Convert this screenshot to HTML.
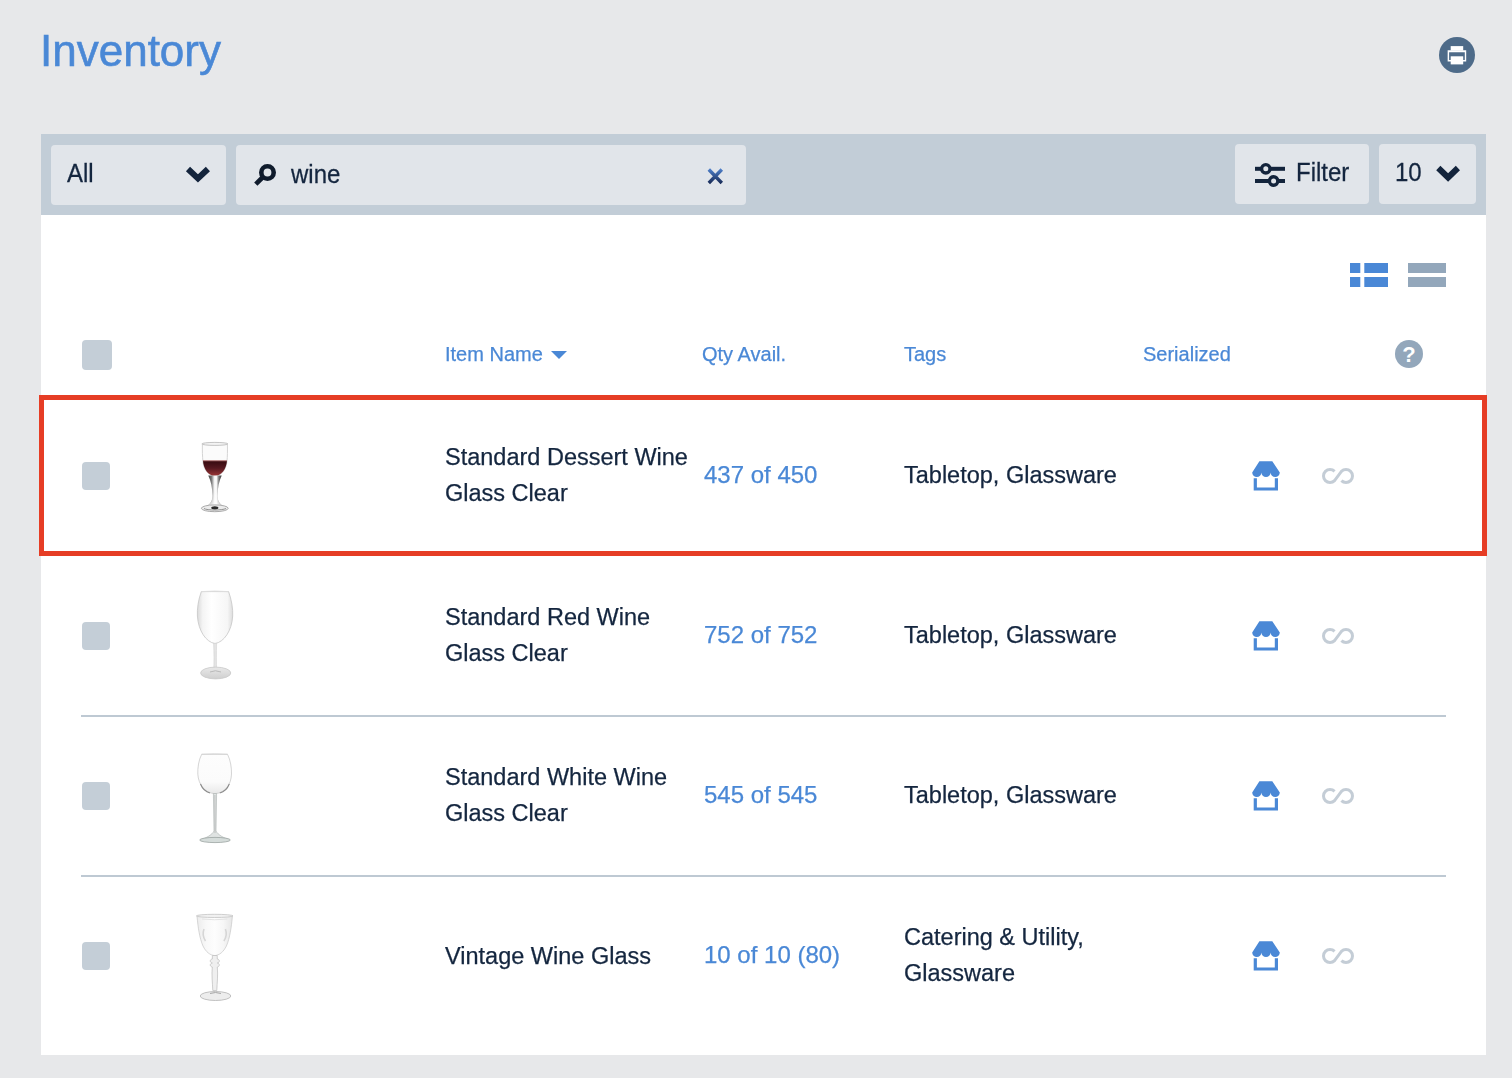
<!DOCTYPE html>
<html><head><meta charset="utf-8">
<style>
html,body{margin:0;padding:0;}
body{width:1512px;height:1078px;overflow:hidden;background:#e7e8ea;position:relative;font-family:"Liberation Sans",sans-serif;color:#14263f;}
.a{position:absolute;}
.t{position:absolute;line-height:1;white-space:nowrap;will-change:transform;-webkit-text-stroke:0.25px currentColor;}
.title{font-size:44px;color:#4a88d6;left:40px;top:29px;-webkit-text-stroke:0.6px #4a88d6;transform:scaleY(1.02);transform-origin:0 80%;}
.toolbar{left:41px;top:134px;width:1445px;height:81px;background:#c2cdd7;}
.box{position:absolute;background:#e1e5ea;border-radius:4px;}
.panel{left:41px;top:215px;width:1445px;height:840px;background:#fff;}
.hdr{font-size:20px;color:#4a88d6;}
.cb{position:absolute;width:30px;height:30px;border-radius:4px;background:#c4ced7;}
.cbr{position:absolute;width:28px;height:28px;border-radius:4px;background:#c4ced7;}
.nm{font-size:23.5px;}
.qty{font-size:24px;color:#4a88d6;}
.sep{position:absolute;left:81px;width:1365px;height:2px;background:#bec9d3;}
</style></head>
<body>
<div class="t title">Inventory</div>
<!-- print -->
<svg class="a" style="left:1439px;top:37px" width="36" height="36" viewBox="0 0 36 36">
<circle cx="18" cy="18" r="18" fill="#4e6b89"/>
<rect x="11.7" y="9.1" width="12.5" height="4.5" fill="#fff"/>
<path fill="#fff" fill-rule="evenodd" d="M8.65,13.2H27.2V24.4H8.65Z M10.1,15.2V23H25.8V15.2Z"/>
<rect x="11.7" y="19.3" width="12.5" height="8.1" fill="#fff"/>
</svg>

<div class="a toolbar"></div>
<div class="box" style="left:51px;top:145px;width:175px;height:60px;"></div>
<div class="box" style="left:236px;top:145px;width:510px;height:60px;"></div>
<div class="box" style="left:1235px;top:144px;width:134px;height:60px;"></div>
<div class="box" style="left:1379px;top:144px;width:97px;height:60px;"></div>

<div class="t" style="transform:scaleY(1.045);transform-origin:0 84.6%;font-size:24px;left:67px;top:161.7px;">All</div>
<svg class="a" style="left:184px;top:164px" width="28" height="22" viewBox="0 0 28 22">
<path d="M4,5 L13.95,14.46 L23.9,5" fill="none" stroke="#13243c" stroke-width="6"/>
</svg>
<!-- search icon -->
<svg class="a" style="left:252px;top:162px" width="26" height="26" viewBox="0 0 26 26">
<circle cx="15.5" cy="10.5" r="6.2" fill="none" stroke="#0f1b2c" stroke-width="4.6"/>
<path d="M11.5,14.5 L3.8,22.2" stroke="#0f1b2c" stroke-width="4.6"/>
</svg>
<div class="t" style="transform:scaleY(1.045);transform-origin:0 84.6%;font-size:24px;left:290.5px;top:162.5px;">wine</div>
<svg class="a" style="left:700px;top:162px" width="30" height="28" viewBox="0 0 30 28">
<defs><linearGradient id="xg" x1="0" y1="0" x2="0" y2="1"><stop offset="0" stop-color="#4b7cc6"/><stop offset="1" stop-color="#192d5a"/></linearGradient></defs>
<path d="M8.8,7.5 L21.8,21 M21.8,7.5 L8.8,21" stroke="url(#xg)" stroke-width="3.4" fill="none"/>
</svg>
<!-- filter -->
<svg class="a" style="left:1254px;top:161px" width="32" height="27" viewBox="0 0 32 27">
<rect x="1" y="5.8" width="30" height="4" fill="#13243c"/>
<rect x="1" y="18" width="30" height="4" fill="#13243c"/>
<circle cx="11.8" cy="7.8" r="4.2" fill="#e1e5ea" stroke="#13243c" stroke-width="3.4"/>
<circle cx="19.6" cy="20" r="4.2" fill="#e1e5ea" stroke="#13243c" stroke-width="3.4"/>
</svg>
<div class="t" style="transform:scaleY(1.045);transform-origin:0 84.6%;font-size:24px;left:1296px;top:160.5px;">Filter</div>
<div class="t" style="transform:scaleY(1.045);transform-origin:0 84.6%;font-size:24px;left:1394.6px;top:160.7px;">10</div>
<svg class="a" style="left:1434px;top:163px" width="28" height="22" viewBox="0 0 28 22">
<path d="M4.3,5 L14.1,14.5 L23.9,5" fill="none" stroke="#13243c" stroke-width="6"/>
</svg>

<div class="a panel"></div>
<!-- view icons -->
<svg class="a" style="left:1350px;top:263px" width="38" height="24" viewBox="0 0 38 24">
<rect x="0" y="0" width="10.3" height="10" fill="#4a88d6"/>
<rect x="14.3" y="0" width="23.7" height="10" fill="#4a88d6"/>
<rect x="0" y="14" width="10.3" height="10" fill="#4a88d6"/>
<rect x="14.3" y="14" width="23.7" height="10" fill="#4a88d6"/>
</svg>
<svg class="a" style="left:1408px;top:263px" width="38" height="24" viewBox="0 0 38 24">
<rect x="0" y="0" width="38" height="10" fill="#93a7bb"/>
<rect x="0" y="14" width="38" height="10" fill="#93a7bb"/>
</svg>
<!-- glasses -->
<svg class="a" style="left:190px;top:435px" width="50" height="85" viewBox="0 0 50 85">
<defs>
<linearGradient id="wine" x1="0" y1="0" x2="0" y2="1"><stop offset="0" stop-color="#b87474"/><stop offset="0.1" stop-color="#3a0c12"/><stop offset="0.5" stop-color="#561820"/><stop offset="1" stop-color="#9c3636"/></linearGradient>
<linearGradient id="stem1" x1="0" y1="0" x2="1" y2="0"><stop offset="0" stop-color="#3a3a3a"/><stop offset="0.25" stop-color="#7a7a7a"/><stop offset="0.45" stop-color="#f2f2f2"/><stop offset="0.6" stop-color="#ffffff"/><stop offset="0.8" stop-color="#6e6e6e"/><stop offset="1" stop-color="#3a3a3a"/></linearGradient>
<linearGradient id="stemfade" x1="0" y1="0" x2="0" y2="1"><stop offset="0" stop-color="#fff" stop-opacity="0"/><stop offset="0.55" stop-color="#fff" stop-opacity="0.1"/><stop offset="1" stop-color="#fff" stop-opacity="0.85"/></linearGradient>
</defs>
<path d="M12.4,9 C12.2,16 12.5,22 12.9,26 C13.5,35 19,41 24.8,41 C30.6,41 36.5,35 37,26 C37.4,22 37.6,16 37.4,9" fill="#fbfbfb" stroke="#cfcfcf" stroke-width="0.9"/>
<path d="M12.9,25.3 C13.5,35 19,41 24.8,41 C30.6,41 36.5,35 37,25.3 Z" fill="url(#wine)"/>
<ellipse cx="24.9" cy="8.9" rx="13" ry="1.5" fill="#f3f3f3" stroke="#c4c4c4" stroke-width="1"/>
<path d="M18.3,40.5 C21,46 22.4,53 22.5,61 C22.4,65 21.2,68 18.5,70 L31.5,70 C28.8,68 27.6,65 27.5,61 C27.6,53 29,46 31.7,40.5 Z" fill="url(#stem1)"/>
<path d="M18.3,40.5 C21,46 22.4,53 22.5,61 C22.4,65 21.2,68 18.5,70 L31.5,70 C28.8,68 27.6,65 27.5,61 C27.6,53 29,46 31.7,40.5 Z" fill="url(#stemfade)"/>
<ellipse cx="24.8" cy="73.3" rx="13.4" ry="3.4" fill="#ececec" stroke="#a2a2a2" stroke-width="0.9"/>
<ellipse cx="24.8" cy="72.8" rx="3.6" ry="1.6" fill="#2a2a2a"/>
<path d="M14,73.5 C17,75.5 32,75.5 36,73.5" fill="none" stroke="#7b7b7b" stroke-width="0.8"/>
</svg>
<svg class="a" style="left:190px;top:585px" width="50" height="100" viewBox="0 0 50 100">
<defs>
<linearGradient id="bowlg" x1="0" y1="0" x2="1" y2="0"><stop offset="0" stop-color="#d9d9d9"/><stop offset="0.15" stop-color="#f4f4f4"/><stop offset="0.4" stop-color="#ffffff"/><stop offset="0.85" stop-color="#f6f6f6"/><stop offset="1" stop-color="#dcdcdc"/></linearGradient>
<linearGradient id="footg" x1="0" y1="0" x2="0" y2="1"><stop offset="0" stop-color="#e9e9e9"/><stop offset="1" stop-color="#cfcfcf"/></linearGradient>
</defs>
<path d="M11.3,6.6 C8.2,15 7,24 7.4,31 C8.4,46 16,57 25,58.6 C34,57 41.8,46 42.7,31 C43.1,24 41.6,15 38.6,6.6 Z" fill="url(#bowlg)" stroke="#c6c6c6" stroke-width="0.8"/>
<path d="M11.3,6.6 Q25,5.6 38.6,6.6" fill="none" stroke="#dedede" stroke-width="1"/>
<path d="M23.6,58.3 C24,68 24.2,78 23.6,86 L26.8,86 C26.2,78 26.4,68 26.6,58.3 Z" fill="#e4e4e4" stroke="#cdcdcd" stroke-width="0.5"/>
<ellipse cx="25.7" cy="88" rx="15.1" ry="5.9" fill="url(#footg)" stroke="#c9c9c9" stroke-width="0.8"/>
<path d="M20,87 Q25.4,84.5 31,87" fill="none" stroke="#b9b9b9" stroke-width="1"/>
</svg>
<svg class="a" style="left:190px;top:745px" width="50" height="105" viewBox="0 0 50 105">
<defs>
<linearGradient id="bowl3" x1="0" y1="0" x2="0" y2="1"><stop offset="0" stop-color="#fdfdfd"/><stop offset="0.7" stop-color="#fbfbfb"/><stop offset="1" stop-color="#e8e8e8"/></linearGradient>
</defs>
<path d="M11.7,9.3 C8.6,15 7.6,23 7.8,29 C8.5,40 15,48 24.9,48.7 C34.8,48 41.2,40 41.5,29 C41.6,23 40.6,15 37.5,9.3 Z" fill="url(#bowl3)" stroke="#c3c3c3" stroke-width="0.7"/>
<path d="M10.5,39 C12.5,44 16,47 20,48" fill="none" stroke="#8a8a8a" stroke-width="1.1"/>
<path d="M39.3,39 C37.3,44 33.8,47 29.8,48" fill="none" stroke="#8a8a8a" stroke-width="1.1"/>
<path d="M11.7,9.3 Q24.6,8.3 37.5,9.3" fill="none" stroke="#d3d3d3" stroke-width="0.8"/>
<path d="M23.4,48.5 L24,86 C22,90 16,93 10,95 L40,95 C34,93 28,90 26,86 L26.6,48.5 Z" fill="#dfe3e2" stroke="#a9b0ae" stroke-width="0.6"/>
<path d="M24.9,50 L25,88" stroke="#b0b0b0" stroke-width="0.7"/>
<ellipse cx="25" cy="95" rx="15.3" ry="2.6" fill="#d5dcda" stroke="#9aa3a1" stroke-width="0.8"/>
</svg>
<svg class="a" style="left:190px;top:905px" width="50" height="100" viewBox="0 0 50 100">
<defs>
<linearGradient id="bowl4" x1="0" y1="0" x2="1" y2="0"><stop offset="0" stop-color="#ececec"/><stop offset="0.25" stop-color="#f8f8f8"/><stop offset="0.5" stop-color="#fdfdfd"/><stop offset="0.75" stop-color="#f6f6f6"/><stop offset="1" stop-color="#e6e6e6"/></linearGradient>
</defs>
<path d="M7,11 C8,22 9.5,33 13,41 C16,47 20,50.2 24.7,50.6 C29.4,50.2 33.4,47 36.4,41 C39.9,33 41.4,22 42.4,11 Z" fill="url(#bowl4)" stroke="#cdcdcd" stroke-width="0.8"/>
<ellipse cx="24.7" cy="10.9" rx="18.3" ry="1.6" fill="#f1f1f1" stroke="#c4c4c4" stroke-width="0.8"/>
<path d="M12,14 Q24.7,15.5 37.4,14" fill="none" stroke="#dddddd" stroke-width="0.8"/>
<path d="M14,24 C12.5,28 13.5,33 15.5,36 M35.4,24 C36.9,28 35.9,33 33.9,36" fill="none" stroke="#d6d6d6" stroke-width="1.6"/>
<path d="M22.4,50.5 L22.3,54 C19.5,54.6 19.6,57.4 22.3,58 C19.6,58.6 19.6,61.4 22.3,62 C21.5,70 22.5,78 22.8,85.5 L26.8,85.5 C27.1,78 28.1,70 27.3,62 C30,61.4 30,58.6 27.3,58 C30,57.4 30.1,54.6 27.3,54 L27.2,50.5 Z" fill="#efefef" stroke="#bcbcbc" stroke-width="0.7"/>
<ellipse cx="25.5" cy="91" rx="15.3" ry="4.5" fill="#ededed" stroke="#b3b3b3" stroke-width="0.8"/>
<path d="M20,88.5 Q25.5,86.5 31,88.5" fill="none" stroke="#a8a8a8" stroke-width="1"/>
</svg>
<!-- header -->
<div class="cb" style="left:82px;top:340px;"></div>
<div class="t hdr" style="left:445.3px;top:344px;">Item Name</div>
<svg class="a" style="left:551px;top:351px" width="16" height="8" viewBox="0 0 16 8"><path d="M0,0H16L8,8Z" fill="#4a88d6"/></svg>
<div class="t hdr" style="left:702px;top:344px;">Qty Avail.</div>
<div class="t hdr" style="left:904px;top:344px;">Tags</div>
<div class="t hdr" style="left:1142.5px;top:344px;">Serialized</div>
<svg class="a" style="left:1395px;top:340px" width="28" height="28" viewBox="0 0 28 28">
<circle cx="14" cy="14" r="14" fill="#93a7bb"/>
<text x="14" y="22" text-anchor="middle" font-family="Liberation Sans" font-weight="bold" font-size="22" fill="#fff">?</text>
</svg>
<div class="cbr" style="left:82px;top:462px;"></div>
<div class="t nm" style="left:445.0px;top:446.1px;">Standard Dessert Wine</div>
<div class="t nm" style="left:445.0px;top:482.1px;">Glass Clear</div>
<div class="t qty" style="left:703.5px;top:462.7px;">437 of 450</div>
<div class="t nm" style="left:903.5px;top:464.1px;">Tabletop, Glassware</div>
<svg class="a" style="left:1246px;top:456px" width="40" height="40" viewBox="0 0 40 40">
<path d="M13.4,5.2H26.3L33.8,16.5A4.6,4.6 0 0 1 24.6,16.5A4.6,4.6 0 0 1 15.4,16.5A4.6,4.6 0 0 1 6.2,16.5Z" fill="#4a88d6"/>
<path d="M9.3,22.3V33H30.4V22.3" fill="none" stroke="#4a88d6" stroke-width="3.2"/>
</svg>
<svg class="a" style="left:1320px;top:466px" width="36" height="20" viewBox="0 0 36 20">
<path d="M14.6,5.4A6.5,6.5 0 1 0 14.6,14.6L21.4,5.4A6.5,6.5 0 1 1 21.4,14.6" fill="none" stroke="#c4cdd6" stroke-width="3"/>
</svg>
<div class="cbr" style="left:82px;top:622px;"></div>
<div class="t nm" style="left:445.0px;top:606.1px;">Standard Red Wine</div>
<div class="t nm" style="left:445.0px;top:642.1px;">Glass Clear</div>
<div class="t qty" style="left:703.5px;top:622.7px;">752 of 752</div>
<div class="t nm" style="left:903.5px;top:624.1px;">Tabletop, Glassware</div>
<svg class="a" style="left:1246px;top:616px" width="40" height="40" viewBox="0 0 40 40">
<path d="M13.4,5.2H26.3L33.8,16.5A4.6,4.6 0 0 1 24.6,16.5A4.6,4.6 0 0 1 15.4,16.5A4.6,4.6 0 0 1 6.2,16.5Z" fill="#4a88d6"/>
<path d="M9.3,22.3V33H30.4V22.3" fill="none" stroke="#4a88d6" stroke-width="3.2"/>
</svg>
<svg class="a" style="left:1320px;top:626px" width="36" height="20" viewBox="0 0 36 20">
<path d="M14.6,5.4A6.5,6.5 0 1 0 14.6,14.6L21.4,5.4A6.5,6.5 0 1 1 21.4,14.6" fill="none" stroke="#c4cdd6" stroke-width="3"/>
</svg>
<div class="cbr" style="left:82px;top:782px;"></div>
<div class="t nm" style="left:445.0px;top:766.1px;">Standard White Wine</div>
<div class="t nm" style="left:445.0px;top:802.1px;">Glass Clear</div>
<div class="t qty" style="left:703.5px;top:782.7px;">545 of 545</div>
<div class="t nm" style="left:903.5px;top:784.1px;">Tabletop, Glassware</div>
<svg class="a" style="left:1246px;top:776px" width="40" height="40" viewBox="0 0 40 40">
<path d="M13.4,5.2H26.3L33.8,16.5A4.6,4.6 0 0 1 24.6,16.5A4.6,4.6 0 0 1 15.4,16.5A4.6,4.6 0 0 1 6.2,16.5Z" fill="#4a88d6"/>
<path d="M9.3,22.3V33H30.4V22.3" fill="none" stroke="#4a88d6" stroke-width="3.2"/>
</svg>
<svg class="a" style="left:1320px;top:786px" width="36" height="20" viewBox="0 0 36 20">
<path d="M14.6,5.4A6.5,6.5 0 1 0 14.6,14.6L21.4,5.4A6.5,6.5 0 1 1 21.4,14.6" fill="none" stroke="#c4cdd6" stroke-width="3"/>
</svg>
<div class="cbr" style="left:82px;top:942px;"></div>
<div class="t nm" style="left:445.0px;top:945.1px;">Vintage Wine Glass</div>
<div class="t qty" style="left:703.5px;top:942.7px;">10 of 10 (80)</div>
<div class="t nm" style="left:903.5px;top:926.1px;">Catering &amp; Utility,</div>
<div class="t nm" style="left:903.5px;top:962.1px;">Glassware</div>
<svg class="a" style="left:1246px;top:936px" width="40" height="40" viewBox="0 0 40 40">
<path d="M13.4,5.2H26.3L33.8,16.5A4.6,4.6 0 0 1 24.6,16.5A4.6,4.6 0 0 1 15.4,16.5A4.6,4.6 0 0 1 6.2,16.5Z" fill="#4a88d6"/>
<path d="M9.3,22.3V33H30.4V22.3" fill="none" stroke="#4a88d6" stroke-width="3.2"/>
</svg>
<svg class="a" style="left:1320px;top:946px" width="36" height="20" viewBox="0 0 36 20">
<path d="M14.6,5.4A6.5,6.5 0 1 0 14.6,14.6L21.4,5.4A6.5,6.5 0 1 1 21.4,14.6" fill="none" stroke="#c4cdd6" stroke-width="3"/>
</svg>

<div class="sep" style="top:715px;"></div>
<div class="sep" style="top:875px;"></div>
<div class="a" style="left:39px;top:395px;width:1438px;height:151px;border:5px solid #e63d25;"></div>

</body></html>
